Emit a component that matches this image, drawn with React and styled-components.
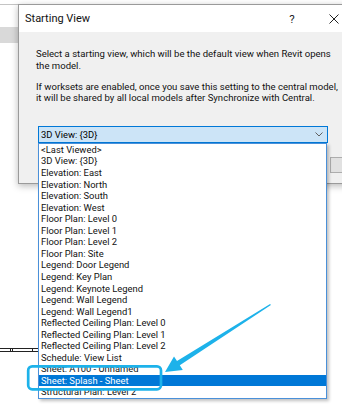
import React from 'react'
import styled, { createGlobalStyle } from 'styled-components'

const GlobalStyle = createGlobalStyle`
  html, body {
    margin: 0;
    padding: 0;
    background: #fff;
  }
  body {
    font-family: Roboto, "Noto Sans", sans-serif;
    color: #000;
  }
`

const Screen = styled.div`
  position: relative;
  width: 342px;
  height: 414px;
  overflow: hidden;
  background: #fff;
`

// revit window behind the dialog
const RibbonEdge = styled.div`
  height: 4px;
  border-bottom: 1px solid #c4c4c4;
`
const ViewTabs = styled.div`
  margin-top: 22px;
  height: 16px;
  background: #d9d9d9;
`
const DrawingLine = styled.svg`
  display: block;
  margin-top: 304px;
`

const Dialog = styled.div`
  position: absolute;
  left: 18px;
  top: 4px;
  width: 340px;
  height: 180px;
  box-sizing: border-box;
  border: 1px solid #9a9a9a;
  box-shadow: 0 2px 7px rgba(0, 0, 0, 0.28);
  display: flex;
  flex-direction: column;
  background: #f0f0f0;
`
const TitleBar = styled.div`
  height: 27px;
  flex: none;
  background: #fff;
  display: flex;
  align-items: center;
`
const Title = styled.div`
  flex: 1;
  padding-left: 6px;
  font-size: 11px;
  color: #111;
`
const TitleButton = styled.div`
  width: ${p => p.w}px;
  flex: none;
  height: 27px;
  display: flex;
  align-items: center;
  justify-content: center;
  font-size: 11.5px;
  color: #222;
`
const Body = styled.div`
  flex: 1;
  padding: 16.25px 0 0 17px;
`
const Para = styled.p`
  margin: ${p => p.gap || 0}px 0 0;
  font-size: 9.55px;
  line-height: 11.5px;
  white-space: nowrap;
  color: #111;
`
const ComboRow = styled.div`
  display: flex;
  align-items: flex-start;
  margin: 22px 0 0 2px;
`
const ComboWrap = styled.div`
  position: relative;
  width: 290px;
  flex: none;
`
const Combo = styled.div`
  height: 17px;
  box-sizing: border-box;
  border: 1px solid #0078d7;
  background: #cce4f7;
  display: flex;
  align-items: center;
  justify-content: space-between;
  padding: 0 4px 0 2px;
  font-size: 9.4px;
`
const SideButton = styled.div`
  margin: 31px 0 0 2px;
  width: 40px;
  height: 16px;
  flex: none;
  box-sizing: border-box;
  border: 1px solid #adadad;
  background: #e1e1e1;
`
const DropList = styled.div`
  position: absolute;
  top: 100%;
  left: 0;
  width: 289px;
  height: 256px;
  box-sizing: border-box;
  border: 1px solid #4a90d9;
  background: #fff;
  overflow: hidden;
  box-shadow: 2px 2px 3px rgba(0, 0, 0, 0.25);
`
const Item = styled.div`
  height: 11.55px;
  line-height: 11.55px;
  padding-left: 2px;
  font-size: 9.4px;
  white-space: nowrap;
  background: ${p => (p.selected ? '#0078d7' : 'transparent')};
  color: ${p => (p.selected ? '#fff' : '#111')};
`

const Overlay = styled.svg`
  position: absolute;
  left: 0;
  top: 0;
  pointer-events: none;
`

const views = [
  '<Last Viewed>',
  '3D View: {3D}',
  'Elevation: East',
  'Elevation: North',
  'Elevation: South',
  'Elevation: West',
  'Floor Plan: Level 0',
  'Floor Plan: Level 1',
  'Floor Plan: Level 2',
  'Floor Plan: Site',
  'Legend: Door Legend',
  'Legend: Key Plan',
  'Legend: Keynote Legend',
  'Legend: Wall Legend',
  'Legend: Wall Legend1',
  'Reflected Ceiling Plan: Level 0',
  'Reflected Ceiling Plan: Level 1',
  'Reflected Ceiling Plan: Level 2',
  'Schedule: View List',
  'Sheet: A100 - Unnamed',
  'Sheet: Splash - Sheet',
  'Structural Plan: Level 2',
]

const Chevron = () => (
  <svg width="8" height="5" viewBox="0 0 8 5">
    <path d="M0.5 0.5 L4 4 L7.5 0.5" fill="none" stroke="#606060" strokeWidth="1" />
  </svg>
)

const CloseIcon = () => (
  <svg width="10" height="10" viewBox="0 0 10 10">
    <path d="M0.5 0.5 L9.5 9.5 M9.5 0.5 L0.5 9.5" stroke="#222" strokeWidth="1" />
  </svg>
)

export default function App() {
  return (
    <Screen>
      <GlobalStyle />
      <RibbonEdge />
      <ViewTabs />
      <DrawingLine width="40" height="6" viewBox="0 0 40 6">
        <path d="M0 1.5 H40 M0 4.5 H40" stroke="#222" strokeWidth="1" />
        <path d="M10.5 1.5 V4.5 M12.5 1.5 V4.5 M32.5 1.5 V4.5" stroke="#222" strokeWidth="1" />
      </DrawingLine>

      <Dialog>
        <TitleBar>
          <Title>Starting View</Title>
          <TitleButton w={38}>?</TitleButton>
          <TitleButton w={46}>
            <CloseIcon />
          </TitleButton>
        </TitleBar>
        <Body>
          <Para>
            Select a starting view, which will be the default view when Revit opens
            <br />
            the model.
          </Para>
          <Para gap={9.7}>
            If worksets are enabled, once you save this setting to the central model,
            <br />
            it will be shared by all local models after Synchronize with Central.
          </Para>
          <ComboRow>
            <ComboWrap>
              <Combo>
                <span>3D View: {'{3D}'}</span>
                <Chevron />
              </Combo>
              <DropList>
                {views.map(v => (
                  <Item key={v} selected={v === 'Sheet: Splash - Sheet'}>
                    {v}
                  </Item>
                ))}
              </DropList>
            </ComboWrap>
            <SideButton />
          </ComboRow>
        </Body>
      </Dialog>

      <Overlay width="342" height="414" viewBox="0 0 342 414">
        <rect x="28.2" y="366.4" width="132.8" height="22.9" rx="4" fill="none" stroke="#1db2ea" strokeWidth="2.7" />
        <polygon
          points="165,372 174,356.5 177,361.1 270.1,303.9 270.9,305.1 179.8,365.3 182.8,369.9"
          fill="#1db2ea"
        />
      </Overlay>
    </Screen>
  )
}
